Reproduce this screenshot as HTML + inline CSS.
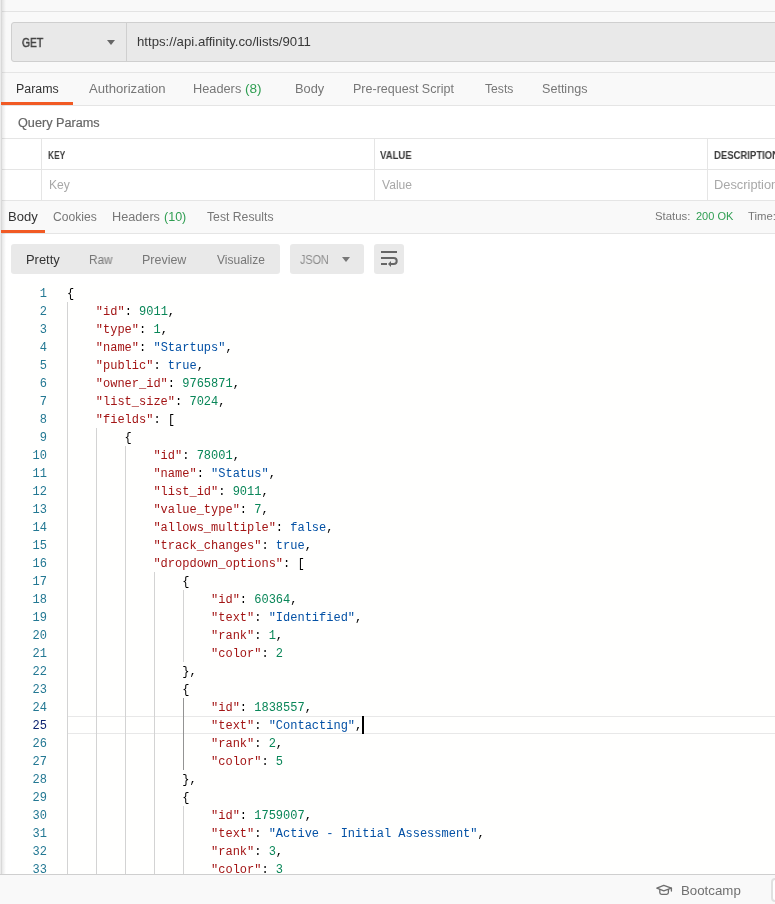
<!DOCTYPE html>
<html><head><meta charset="utf-8">
<style>
html,body{margin:0;padding:0;}
body{width:775px;height:904px;overflow:hidden;position:relative;background:#f9f9f9;font-family:"Liberation Sans",sans-serif;color:#333;}
.a{position:absolute;box-sizing:border-box;}
.t{position:absolute;white-space:nowrap;line-height:14px;transform-origin:0 0;will-change:transform;}
#edge0{left:0;top:0;width:1px;height:874px;background:#ebebeb;}
#edge1{left:1px;top:0;width:1px;height:874px;background:#d9d9d9;}
#edge2{left:2px;top:0;width:4px;height:874px;background:linear-gradient(to right,rgba(0,0,0,0.09),rgba(0,0,0,0));}
.hl{position:absolute;left:0;width:775px;height:1px;background:#e5e5e5;}
#url{left:11px;top:22px;width:775px;height:40px;background:#e9e9e9;border:1px solid #cfcfcf;border-radius:3px;}
.ul{position:absolute;height:3px;background:#f15a24;z-index:5;}
.vl{position:absolute;width:1px;background:#e5e5e5;}
.seg{position:absolute;background:#e9e9e9;border-radius:3px;}
.code{position:absolute;left:11px;top:284px;width:764px;height:590px;background:#fffffe;}
.g{position:absolute;width:1px;height:18px;background:#d3d3d3;}
.ga{position:absolute;width:1px;height:18px;background:#939393;}
.cl{will-change:transform;position:absolute;left:67px;white-space:pre;font-family:"Liberation Mono",monospace;font-size:12px;line-height:18px;height:18px;color:#000;}
.cl i{font-style:normal;}
.k{color:#a31515;} .s{color:#0451a5;} .n{color:#098658;} .b{color:#0451a5;} .p{color:#000;}
.ln{will-change:transform;position:absolute;left:11px;width:36px;text-align:right;font-family:"Liberation Mono",monospace;font-size:12px;line-height:18px;height:18px;color:#237893;}
.ln.cur{color:#0b216f;}
#curline{left:67px;top:716px;width:708px;height:18px;border-top:1px solid #e8e8e8;border-bottom:1px solid #e8e8e8;}
#caret{left:362px;top:716px;width:2px;height:18px;background:#000;}
#foot{left:0;top:874px;width:775px;height:30px;background:#f9f9f9;border-top:1px solid #cfcfcf;}
</style></head><body>
<div class="hl" style="top:11px;background:#e3e3e3"></div>
<div class="a" id="url"></div>
<div class="a" style="left:126px;top:23px;width:1px;height:38px;background:#cfcfcf"></div>
<svg class="a" style="left:107px;top:40px" width="8" height="5" viewBox="0 0 8 5"><path d="M0 0H8L4 5Z" fill="#666"/></svg>

<div class="hl" style="top:72px"></div>
<div class="hl" style="top:105px"></div>
<div class="ul" style="left:1px;top:102px;width:72px"></div>

<div class="a" style="left:0;top:106px;width:775px;height:94px;background:#fff"></div>
<div class="hl" style="top:138px"></div>
<div class="hl" style="top:169px"></div>
<div class="hl" style="top:200px"></div>
<div class="vl" style="left:41px;top:138px;height:62px"></div>
<div class="vl" style="left:374px;top:138px;height:62px"></div>
<div class="vl" style="left:707px;top:138px;height:62px"></div>

<div class="a" style="left:0;top:234px;width:775px;height:640px;background:#fff"></div>
<div class="hl" style="top:233px"></div>
<div class="ul" style="left:1px;top:230px;width:44px"></div>

<div class="seg" style="left:11px;top:244px;width:269px;height:30px"></div>
<div class="seg" style="left:290px;top:244px;width:74px;height:30px"></div>
<svg class="a" style="left:342px;top:257px" width="8" height="5" viewBox="0 0 8 5"><path d="M0 0H8L4 5Z" fill="#777"/></svg>
<div class="seg" style="left:374px;top:244px;width:30px;height:30px"></div>
<svg class="a" style="left:374px;top:244px" width="30" height="30" viewBox="0 0 30 30">
<g fill="none" stroke="#666" stroke-width="2">
<path d="M7 8H23"/><path d="M7 14H19.7A2.9 2.9 0 0 1 19.7 20H15"/><path d="M7 20H13"/>
</g><path d="M17 17L14 20L17 23Z" fill="#666"/></svg>

<div class="code"></div>
<div class="a" id="curline"></div>
<div class="g" style="left:67px;top:302px"></div>
<div class="g" style="left:67px;top:320px"></div>
<div class="g" style="left:67px;top:338px"></div>
<div class="g" style="left:67px;top:356px"></div>
<div class="g" style="left:67px;top:374px"></div>
<div class="g" style="left:67px;top:392px"></div>
<div class="g" style="left:67px;top:410px"></div>
<div class="g" style="left:67px;top:428px"></div>
<div class="g" style="left:96px;top:428px"></div>
<div class="g" style="left:67px;top:446px"></div>
<div class="g" style="left:96px;top:446px"></div>
<div class="g" style="left:125px;top:446px"></div>
<div class="g" style="left:67px;top:464px"></div>
<div class="g" style="left:96px;top:464px"></div>
<div class="g" style="left:125px;top:464px"></div>
<div class="g" style="left:67px;top:482px"></div>
<div class="g" style="left:96px;top:482px"></div>
<div class="g" style="left:125px;top:482px"></div>
<div class="g" style="left:67px;top:500px"></div>
<div class="g" style="left:96px;top:500px"></div>
<div class="g" style="left:125px;top:500px"></div>
<div class="g" style="left:67px;top:518px"></div>
<div class="g" style="left:96px;top:518px"></div>
<div class="g" style="left:125px;top:518px"></div>
<div class="g" style="left:67px;top:536px"></div>
<div class="g" style="left:96px;top:536px"></div>
<div class="g" style="left:125px;top:536px"></div>
<div class="g" style="left:67px;top:554px"></div>
<div class="g" style="left:96px;top:554px"></div>
<div class="g" style="left:125px;top:554px"></div>
<div class="g" style="left:67px;top:572px"></div>
<div class="g" style="left:96px;top:572px"></div>
<div class="g" style="left:125px;top:572px"></div>
<div class="g" style="left:154px;top:572px"></div>
<div class="g" style="left:67px;top:590px"></div>
<div class="g" style="left:96px;top:590px"></div>
<div class="g" style="left:125px;top:590px"></div>
<div class="g" style="left:154px;top:590px"></div>
<div class="g" style="left:183px;top:590px"></div>
<div class="g" style="left:67px;top:608px"></div>
<div class="g" style="left:96px;top:608px"></div>
<div class="g" style="left:125px;top:608px"></div>
<div class="g" style="left:154px;top:608px"></div>
<div class="g" style="left:183px;top:608px"></div>
<div class="g" style="left:67px;top:626px"></div>
<div class="g" style="left:96px;top:626px"></div>
<div class="g" style="left:125px;top:626px"></div>
<div class="g" style="left:154px;top:626px"></div>
<div class="g" style="left:183px;top:626px"></div>
<div class="g" style="left:67px;top:644px"></div>
<div class="g" style="left:96px;top:644px"></div>
<div class="g" style="left:125px;top:644px"></div>
<div class="g" style="left:154px;top:644px"></div>
<div class="g" style="left:183px;top:644px"></div>
<div class="g" style="left:67px;top:662px"></div>
<div class="g" style="left:96px;top:662px"></div>
<div class="g" style="left:125px;top:662px"></div>
<div class="g" style="left:154px;top:662px"></div>
<div class="g" style="left:67px;top:680px"></div>
<div class="g" style="left:96px;top:680px"></div>
<div class="g" style="left:125px;top:680px"></div>
<div class="g" style="left:154px;top:680px"></div>
<div class="g" style="left:67px;top:698px"></div>
<div class="g" style="left:96px;top:698px"></div>
<div class="g" style="left:125px;top:698px"></div>
<div class="g" style="left:154px;top:698px"></div>
<div class="ga" style="left:183px;top:698px"></div>
<div class="g" style="left:67px;top:716px"></div>
<div class="g" style="left:96px;top:716px"></div>
<div class="g" style="left:125px;top:716px"></div>
<div class="g" style="left:154px;top:716px"></div>
<div class="ga" style="left:183px;top:716px"></div>
<div class="g" style="left:67px;top:734px"></div>
<div class="g" style="left:96px;top:734px"></div>
<div class="g" style="left:125px;top:734px"></div>
<div class="g" style="left:154px;top:734px"></div>
<div class="ga" style="left:183px;top:734px"></div>
<div class="g" style="left:67px;top:752px"></div>
<div class="g" style="left:96px;top:752px"></div>
<div class="g" style="left:125px;top:752px"></div>
<div class="g" style="left:154px;top:752px"></div>
<div class="ga" style="left:183px;top:752px"></div>
<div class="g" style="left:67px;top:770px"></div>
<div class="g" style="left:96px;top:770px"></div>
<div class="g" style="left:125px;top:770px"></div>
<div class="g" style="left:154px;top:770px"></div>
<div class="g" style="left:67px;top:788px"></div>
<div class="g" style="left:96px;top:788px"></div>
<div class="g" style="left:125px;top:788px"></div>
<div class="g" style="left:154px;top:788px"></div>
<div class="g" style="left:67px;top:806px"></div>
<div class="g" style="left:96px;top:806px"></div>
<div class="g" style="left:125px;top:806px"></div>
<div class="g" style="left:154px;top:806px"></div>
<div class="g" style="left:183px;top:806px"></div>
<div class="g" style="left:67px;top:824px"></div>
<div class="g" style="left:96px;top:824px"></div>
<div class="g" style="left:125px;top:824px"></div>
<div class="g" style="left:154px;top:824px"></div>
<div class="g" style="left:183px;top:824px"></div>
<div class="g" style="left:67px;top:842px"></div>
<div class="g" style="left:96px;top:842px"></div>
<div class="g" style="left:125px;top:842px"></div>
<div class="g" style="left:154px;top:842px"></div>
<div class="g" style="left:183px;top:842px"></div>
<div class="g" style="left:67px;top:860px"></div>
<div class="g" style="left:96px;top:860px"></div>
<div class="g" style="left:125px;top:860px"></div>
<div class="g" style="left:154px;top:860px"></div>
<div class="g" style="left:183px;top:860px"></div>
<div class="cl" style="top:285px"><i class="p">{</i></div>
<div class="ln" style="top:285px">1</div>
<div class="cl" style="top:303px">    <i class="k">&quot;id&quot;</i><i class="p">: </i><i class="n">9011</i><i class="p">,</i></div>
<div class="ln" style="top:303px">2</div>
<div class="cl" style="top:321px">    <i class="k">&quot;type&quot;</i><i class="p">: </i><i class="n">1</i><i class="p">,</i></div>
<div class="ln" style="top:321px">3</div>
<div class="cl" style="top:339px">    <i class="k">&quot;name&quot;</i><i class="p">: </i><i class="s">&quot;Startups&quot;</i><i class="p">,</i></div>
<div class="ln" style="top:339px">4</div>
<div class="cl" style="top:357px">    <i class="k">&quot;public&quot;</i><i class="p">: </i><i class="b">true</i><i class="p">,</i></div>
<div class="ln" style="top:357px">5</div>
<div class="cl" style="top:375px">    <i class="k">&quot;owner_id&quot;</i><i class="p">: </i><i class="n">9765871</i><i class="p">,</i></div>
<div class="ln" style="top:375px">6</div>
<div class="cl" style="top:393px">    <i class="k">&quot;list_size&quot;</i><i class="p">: </i><i class="n">7024</i><i class="p">,</i></div>
<div class="ln" style="top:393px">7</div>
<div class="cl" style="top:411px">    <i class="k">&quot;fields&quot;</i><i class="p">: [</i></div>
<div class="ln" style="top:411px">8</div>
<div class="cl" style="top:429px">        <i class="p">{</i></div>
<div class="ln" style="top:429px">9</div>
<div class="cl" style="top:447px">            <i class="k">&quot;id&quot;</i><i class="p">: </i><i class="n">78001</i><i class="p">,</i></div>
<div class="ln" style="top:447px">10</div>
<div class="cl" style="top:465px">            <i class="k">&quot;name&quot;</i><i class="p">: </i><i class="s">&quot;Status&quot;</i><i class="p">,</i></div>
<div class="ln" style="top:465px">11</div>
<div class="cl" style="top:483px">            <i class="k">&quot;list_id&quot;</i><i class="p">: </i><i class="n">9011</i><i class="p">,</i></div>
<div class="ln" style="top:483px">12</div>
<div class="cl" style="top:501px">            <i class="k">&quot;value_type&quot;</i><i class="p">: </i><i class="n">7</i><i class="p">,</i></div>
<div class="ln" style="top:501px">13</div>
<div class="cl" style="top:519px">            <i class="k">&quot;allows_multiple&quot;</i><i class="p">: </i><i class="b">false</i><i class="p">,</i></div>
<div class="ln" style="top:519px">14</div>
<div class="cl" style="top:537px">            <i class="k">&quot;track_changes&quot;</i><i class="p">: </i><i class="b">true</i><i class="p">,</i></div>
<div class="ln" style="top:537px">15</div>
<div class="cl" style="top:555px">            <i class="k">&quot;dropdown_options&quot;</i><i class="p">: [</i></div>
<div class="ln" style="top:555px">16</div>
<div class="cl" style="top:573px">                <i class="p">{</i></div>
<div class="ln" style="top:573px">17</div>
<div class="cl" style="top:591px">                    <i class="k">&quot;id&quot;</i><i class="p">: </i><i class="n">60364</i><i class="p">,</i></div>
<div class="ln" style="top:591px">18</div>
<div class="cl" style="top:609px">                    <i class="k">&quot;text&quot;</i><i class="p">: </i><i class="s">&quot;Identified&quot;</i><i class="p">,</i></div>
<div class="ln" style="top:609px">19</div>
<div class="cl" style="top:627px">                    <i class="k">&quot;rank&quot;</i><i class="p">: </i><i class="n">1</i><i class="p">,</i></div>
<div class="ln" style="top:627px">20</div>
<div class="cl" style="top:645px">                    <i class="k">&quot;color&quot;</i><i class="p">: </i><i class="n">2</i></div>
<div class="ln" style="top:645px">21</div>
<div class="cl" style="top:663px">                <i class="p">},</i></div>
<div class="ln" style="top:663px">22</div>
<div class="cl" style="top:681px">                <i class="p">{</i></div>
<div class="ln" style="top:681px">23</div>
<div class="cl" style="top:699px">                    <i class="k">&quot;id&quot;</i><i class="p">: </i><i class="n">1838557</i><i class="p">,</i></div>
<div class="ln" style="top:699px">24</div>
<div class="cl" style="top:717px">                    <i class="k">&quot;text&quot;</i><i class="p">: </i><i class="s">&quot;Contacting&quot;</i><i class="p">,</i></div>
<div class="ln cur" style="top:717px">25</div>
<div class="cl" style="top:735px">                    <i class="k">&quot;rank&quot;</i><i class="p">: </i><i class="n">2</i><i class="p">,</i></div>
<div class="ln" style="top:735px">26</div>
<div class="cl" style="top:753px">                    <i class="k">&quot;color&quot;</i><i class="p">: </i><i class="n">5</i></div>
<div class="ln" style="top:753px">27</div>
<div class="cl" style="top:771px">                <i class="p">},</i></div>
<div class="ln" style="top:771px">28</div>
<div class="cl" style="top:789px">                <i class="p">{</i></div>
<div class="ln" style="top:789px">29</div>
<div class="cl" style="top:807px">                    <i class="k">&quot;id&quot;</i><i class="p">: </i><i class="n">1759007</i><i class="p">,</i></div>
<div class="ln" style="top:807px">30</div>
<div class="cl" style="top:825px">                    <i class="k">&quot;text&quot;</i><i class="p">: </i><i class="s">&quot;Active - Initial Assessment&quot;</i><i class="p">,</i></div>
<div class="ln" style="top:825px">31</div>
<div class="cl" style="top:843px">                    <i class="k">&quot;rank&quot;</i><i class="p">: </i><i class="n">3</i><i class="p">,</i></div>
<div class="ln" style="top:843px">32</div>
<div class="cl" style="top:861px">                    <i class="k">&quot;color&quot;</i><i class="p">: </i><i class="n">3</i></div>
<div class="ln" style="top:861px">33</div>
<div class="a" id="caret"></div>

<div class="a" id="foot"></div>
<svg class="a" style="left:650px;top:878px" width="30" height="22" viewBox="0 0 30 22">
<g fill="none" stroke="#6e6e6e" stroke-width="1.3" stroke-linejoin="round" stroke-linecap="round"><path d="M6.8 10.2L13.8 7.4L21.4 10.2L13.8 12.8Z"/><path d="M21.4 10.2V13"/><path d="M9.8 11.3V14.6Q9.8 16.4 11.6 16.4H16.6Q18.4 16.4 18.4 14.6V11.3"/></g></svg>
<div class="a" style="left:771px;top:878px;width:20px;height:24px;border:2px solid #e0e0e0;border-radius:4px;background:#fff"></div>
<div class="t" style="left:22.4px;top:36px;font-size:13px;color:#444444;transform:scaleX(0.793);-webkit-text-stroke:0.6px #444444;">GET</div>
<div class="t" style="left:136.6px;top:35px;font-size:13px;color:#383838;transform:scaleX(1.015);">https://api.affinity.co/lists/9011</div>
<div class="t" style="left:15.8px;top:82px;font-size:12px;color:#333333;transform:scaleX(1.032);">Params</div>
<div class="t" style="left:88.5px;top:82px;font-size:12px;color:#777777;transform:scaleX(1.094);">Authorization</div>
<div class="t" style="left:193.1px;top:82px;font-size:12px;color:#777777;transform:scaleX(1.064);">Headers</div>
<div class="t" style="left:244.9px;top:82px;font-size:12px;color:#2f9e52;transform:scaleX(1.131);">(8)</div>
<div class="t" style="left:294.8px;top:82px;font-size:12px;color:#777777;transform:scaleX(1.069);">Body</div>
<div class="t" style="left:353.3px;top:82px;font-size:12px;color:#777777;transform:scaleX(1.043);">Pre-request Script</div>
<div class="t" style="left:485.0px;top:82px;font-size:12px;color:#777777;transform:scaleX(1.011);">Tests</div>
<div class="t" style="left:542.3px;top:82px;font-size:12px;color:#777777;transform:scaleX(1.048);">Settings</div>
<div class="t" style="left:17.7px;top:116px;font-size:12px;color:#666666;transform:scaleX(1.056);-webkit-text-stroke:0.2px #666;">Query Params</div>
<div class="t" style="left:47.7px;top:149px;font-size:10px;font-weight:bold;color:#3a3a3a;transform:scaleX(0.833);">KEY</div>
<div class="t" style="left:380.3px;top:149px;font-size:10px;font-weight:bold;color:#3a3a3a;transform:scaleX(0.952);">VALUE</div>
<div class="t" style="left:713.6px;top:149px;font-size:10px;font-weight:bold;color:#3a3a3a;transform:scaleX(0.952);">DESCRIPTION</div>
<div class="t" style="left:48.5px;top:178px;font-size:12px;color:#a8a8a8;transform:scaleX(1.007);">Key</div>
<div class="t" style="left:382.0px;top:178px;font-size:12px;color:#a8a8a8;transform:scaleX(1.007);">Value</div>
<div class="t" style="left:714.3px;top:178px;font-size:12px;color:#a8a8a8;transform:scaleX(1.070);">Description</div>
<div class="t" style="left:8.2px;top:210px;font-size:12px;color:#333333;transform:scaleX(1.085);">Body</div>
<div class="t" style="left:53.4px;top:210px;font-size:12px;color:#777777;transform:scaleX(1.009);">Cookies</div>
<div class="t" style="left:112.3px;top:210px;font-size:12px;color:#777777;transform:scaleX(1.057);">Headers</div>
<div class="t" style="left:164.3px;top:210px;font-size:12px;color:#2f9e52;transform:scaleX(1.045);">(10)</div>
<div class="t" style="left:207.1px;top:210px;font-size:12px;color:#777777;transform:scaleX(1.018);">Test Results</div>
<div class="t" style="left:654.8px;top:209px;font-size:11px;color:#777777;transform:scaleX(1.033);">Status:</div>
<div class="t" style="left:695.9px;top:209px;font-size:11px;color:#2f9e52;transform:scaleX(0.995);">200 OK</div>
<div class="t" style="left:747.9px;top:209px;font-size:11px;color:#777777;transform:scaleX(1.033);">Time:</div>
<div class="t" style="left:25.6px;top:253px;font-size:12px;color:#333333;transform:scaleX(1.077);">Pretty</div>
<div class="t" style="left:89.1px;top:253px;font-size:12px;color:#777777;transform:scaleX(0.978);">Raw</div>
<div class="t" style="left:142.1px;top:253px;font-size:12px;color:#777777;transform:scaleX(1.040);">Preview</div>
<div class="t" style="left:216.8px;top:253px;font-size:12px;color:#777777;">Visualize</div>
<div class="t" style="left:299.5px;top:253px;font-size:12px;color:#8a8a8a;transform:scaleX(0.897);">JSON</div>
<div class="t" style="left:681.3px;top:884px;font-size:13px;color:#707070;transform:scaleX(1.021);">Bootcamp</div>
<div class="a" id="edge0"></div><div class="a" id="edge1"></div><div class="a" id="edge2"></div>
</body></html>
